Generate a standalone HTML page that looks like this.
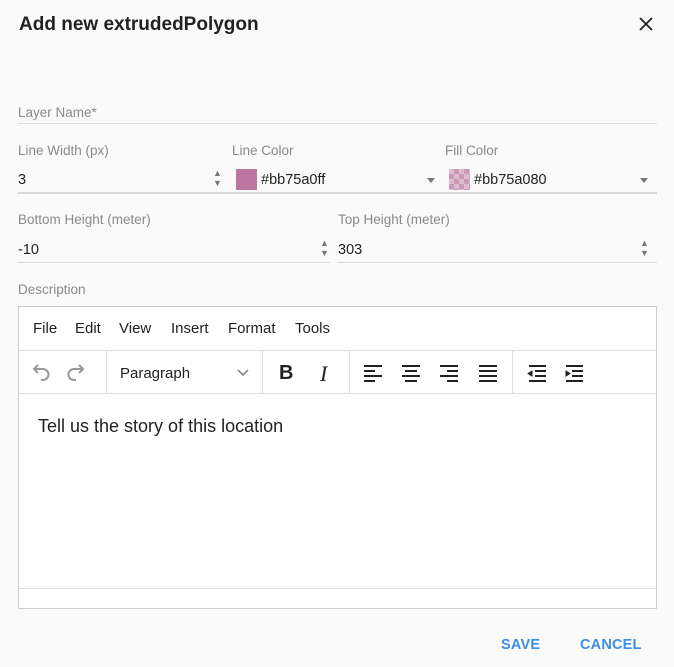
<!DOCTYPE html>
<html><head><style>
*{box-sizing:border-box;margin:0;padding:0}
body{width:674px;height:667px;background:#fafafa;font-family:"Liberation Sans",sans-serif;position:relative;overflow:hidden;color:#222}
.a{position:absolute}
.lbl{font-size:13.5px;color:#8a8a8a}
.val{font-size:14.5px;color:#222}
.ul{height:1px;background:#ddd}
.spin{font-size:9px;color:#777;line-height:10px;text-align:center}
.tri{width:0;height:0;border-left:4px solid transparent;border-right:4px solid transparent;border-top:5px solid #777}
.menu span{position:absolute;top:0}
.sep{position:absolute;top:0;width:1px;height:43px;background:#ddd}
</style></head><body>
<div class="a" style="left:19px;top:14px;font-size:19px;font-weight:bold;color:#222">Add new extrudedPolygon</div>
<svg class="a" style="left:639px;top:17px" width="14" height="14"><path d="M1 1L13 13M13 1L1 13" stroke="#222" stroke-width="1.8"/></svg>

<div class="a lbl" style="left:18px;top:105px">Layer Name*</div>
<div class="a ul" style="left:18px;top:123px;width:639px"></div>

<div class="a lbl" style="left:18px;top:143px">Line Width (px)</div>
<div class="a val" style="left:18px;top:172px">3</div>
<div class="a spin" style="left:213px;top:168px">▲<br>▼</div>
<div class="a lbl" style="left:232px;top:143px">Line Color</div>
<div class="a" style="left:236px;top:169px;width:21px;height:21px;background:#bb75a0"></div>
<div class="a val" style="left:261px;top:172px">#bb75a0ff</div>
<div class="a tri" style="left:427px;top:178px"></div>
<div class="a lbl" style="left:445px;top:143px">Fill Color</div>
<div class="a" style="left:449px;top:169px;width:21px;height:21px;background:#ddbad0;background-image:linear-gradient(45deg,#c99ab7 25%,transparent 25%,transparent 75%,#c99ab7 75%),linear-gradient(45deg,#c99ab7 25%,transparent 25%,transparent 75%,#c99ab7 75%);background-size:10px 10px;background-position:0 0,5px 5px"></div>
<div class="a val" style="left:474px;top:172px">#bb75a080</div>
<div class="a tri" style="left:640px;top:178px"></div>
<div class="a ul" style="left:18px;top:192px;width:639px;background:#d8d8d8;height:2px"></div>

<div class="a lbl" style="left:18px;top:212px">Bottom Height (meter)</div>
<div class="a val" style="left:18px;top:242px">-10</div>
<div class="a spin" style="left:320px;top:238px">▲<br>▼</div>
<div class="a ul" style="left:18px;top:262px;width:312px"></div>
<div class="a lbl" style="left:338px;top:212px">Top Height (meter)</div>
<div class="a val" style="left:338px;top:242px">303</div>
<div class="a spin" style="left:640px;top:238px">▲<br>▼</div>
<div class="a ul" style="left:338px;top:262px;width:319px"></div>

<div class="a lbl" style="left:18px;top:282px">Description</div>
<div class="a" style="left:18px;top:306px;width:639px;height:303px;border:1px solid #ccc;background:#fff">
 <div class="a menu" style="left:0;top:13px;font-size:15px;color:#222"><span style="left:14px">File</span><span style="left:56px">Edit</span><span style="left:100px">View</span><span style="left:152px">Insert</span><span style="left:209px">Format</span><span style="left:276px">Tools</span></div>
 <div class="a" style="left:0;top:43px;width:637px;height:44px;border-top:1px solid #ddd;border-bottom:1px solid #ddd">
  <div class="sep" style="left:87px"></div><div class="sep" style="left:243px"></div><div class="sep" style="left:330px"></div><div class="sep" style="left:493px"></div>
  <svg class="a" style="left:12px;top:10px" width="64" height="24" fill="none" stroke="#999" stroke-width="2"><path d="M7 4L3 8L7 12M3 8H12A5.5 5.5 0 0 1 12 19H10"/><path d="M48 4L52 8L48 12M52 8H43A5.5 5.5 0 0 0 43 19H45"/></svg>
  <div class="a" style="left:101px;top:14px;font-size:15px;color:#222">Paragraph</div>
  <svg class="a" style="left:217px;top:17px" width="14" height="10" fill="none" stroke="#888" stroke-width="1.6"><path d="M2 2L7 7L12 2"/></svg>
  <div class="a" style="left:260px;top:11px;font-size:20px;font-weight:bold;color:#222">B</div>
  <div class="a" style="left:301px;top:10px;font-size:22px;font-style:italic;font-family:'Liberation Serif',serif;color:#222">I</div>
  <svg class="a" style="left:345px;top:13px" width="240" height="18" stroke="#222" stroke-width="2"><path d="M0 2H18M0 7H11M0 12H18M0 17H11"/><path d="M38 2H56M41 7H53M38 12H56M41 17H53"/><path d="M76 2H94M83 7H94M76 12H94M83 17H94"/><path d="M115 2H133M115 7H133M115 12H133M115 17H133"/><path d="M165 2H182M171 7H182M171 12H182M165 17H182"/><path d="M164 9.5L168 7V12Z" fill="#222" stroke-width="1"/><path d="M202 2H219M208 7H219M208 12H219M202 17H219"/><path d="M202 7L206 9.5L202 12Z" fill="#222" stroke-width="1"/></svg>
 </div>
 <div class="a" style="left:19px;top:109px;font-size:18px;color:#222">Tell us the story of this location</div>
 <div class="a" style="left:0;top:281px;width:637px;height:1px;background:#ddd"></div>
</div>

<div class="a" style="left:501px;top:637px;font-size:14.5px;font-weight:bold;color:#3d8ee6;letter-spacing:.2px">SAVE</div>
<div class="a" style="left:580px;top:637px;font-size:14.5px;font-weight:bold;color:#3d8ee6;letter-spacing:.2px">CANCEL</div>
</body></html>
